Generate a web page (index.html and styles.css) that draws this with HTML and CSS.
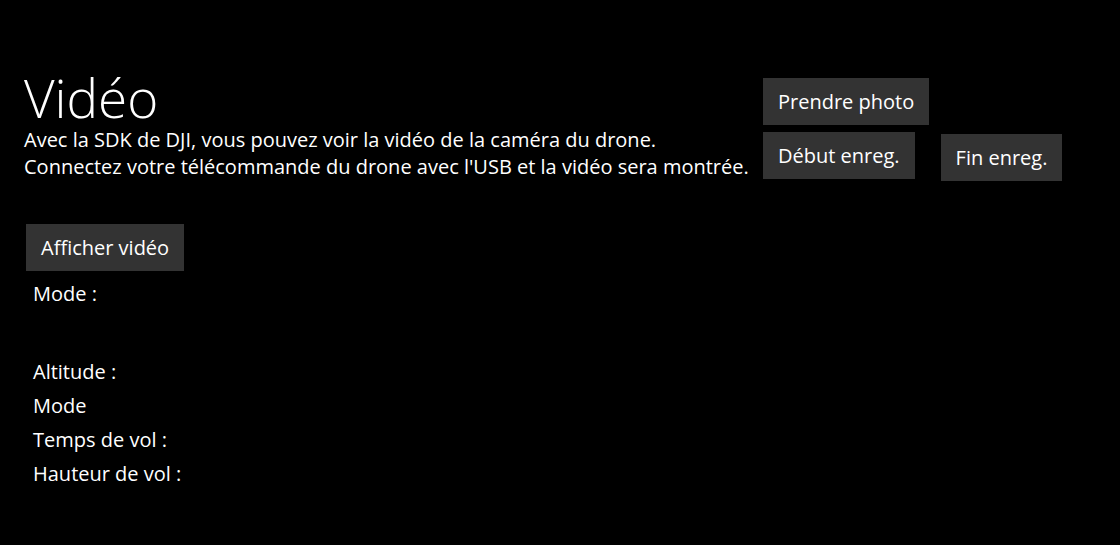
FILE: index.html
```html
<!DOCTYPE html>
<html lang="fr">
  <head>
    <meta charset="UTF-8" />
    <meta name="viewport" content="width=device-width, initial-scale=1.0" />
    <title>Vidéo</title>
    <link rel="stylesheet" href="styles.css">
  </head>
  <body>
    <div class="page">
      <div class="top">
        <div class="intro">
          <h1>Vidéo</h1>
          <p>
            Avec la SDK de DJI, vous pouvez voir la vidéo de la caméra du drone.<br />
            Connectez votre télécommande du drone avec l'USB et la vidéo sera montrée.
          </p>
        </div>

        <!-- Camera controls -->
        <div class="actions">
          <button class="btn">Prendre photo</button>
          <div class="rec-row">
            <button class="btn">Début enreg.</button>
            <button class="btn btn-end">Fin enreg.</button>
          </div>
        </div>
      </div>

      <button class="btn btn-show">Afficher vidéo</button>

      <!-- Flight info -->
      <div class="info">
        <div class="info-line">Mode :</div>
        <div class="info-line gap"></div>
        <div class="info-line">Altitude :</div>
        <div class="info-line">Mode</div>
        <div class="info-line">Temps de vol :</div>
        <div class="info-line">Hauteur de vol :</div>
      </div>
    </div>
  </body>
</html>
```

FILE: styles.css
```css
body {
  margin: 0;
  background-color: #000;
  color: #fff;
  font-family: "Open Sans", "Noto Sans", sans-serif;
}

.page {
  padding: 0 0 0 24px;
}

.top {
  display: flex;
}

.intro {
  width: 739px;
  padding-top: 70px;
}

h1 {
  margin: 0;
  font-size: 53px;
  font-weight: 300;
  line-height: 56px;
}

p {
  margin: 0;
  font-size: 20px;
  line-height: 27px;
}

.actions {
  padding-top: 78px;
}

.btn {
  display: block;
  background-color: #333;
  color: #fff;
  border: none;
  font-family: inherit;
  font-size: 20px;
  padding: 0 15px;
  height: 47px;
  cursor: pointer;
}

.rec-row {
  display: flex;
  align-items: flex-start;
  margin-top: 7px;
}

.btn-end {
  margin-left: 26px;
  margin-top: 2px;
}

.btn-show {
  margin: 43px 0 0 2px;
}

.info {
  padding: 6px 0 0 9px;
  font-size: 20px;
}

.info-line {
  height: 34px;
  line-height: 34px;
}

.info-line.gap {
  height: 44px;
}
```
